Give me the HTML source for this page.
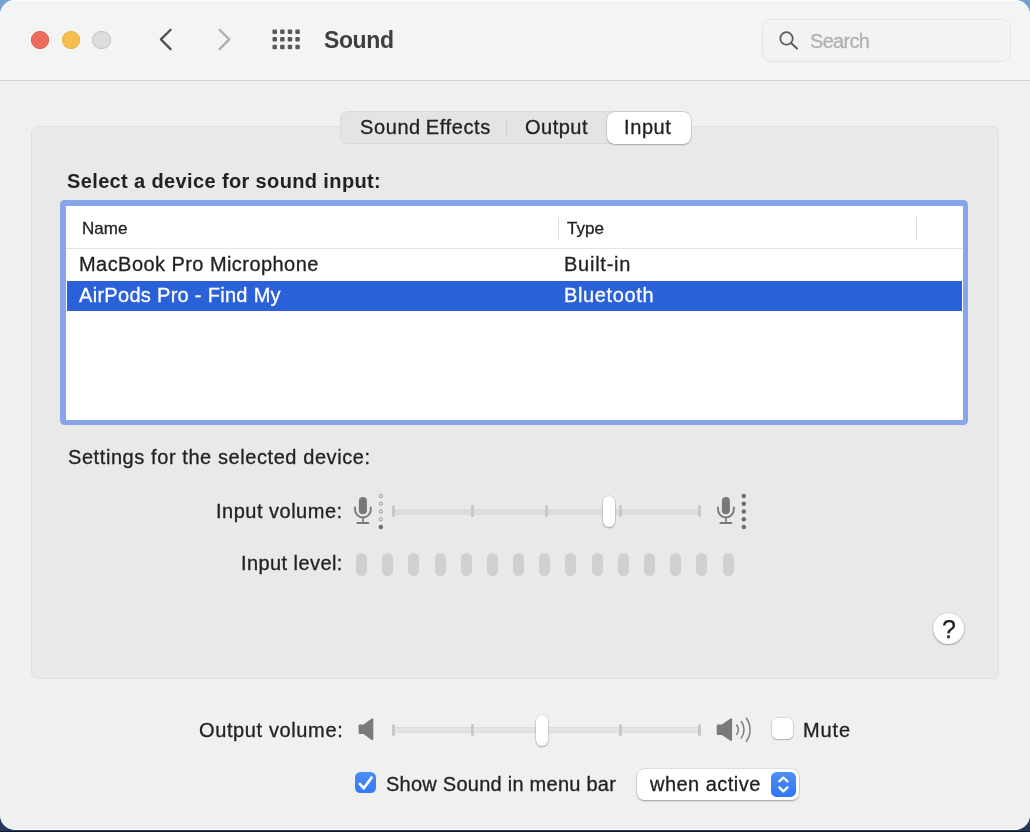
<!DOCTYPE html>
<html><head><meta charset="utf-8">
<style>
*{box-sizing:border-box;margin:0;padding:0}
html,body{width:1030px;height:832px;overflow:hidden}
body{font-family:"Liberation Sans",sans-serif;color:#222;position:relative;
 background:linear-gradient(to bottom,#74a0d0 0,#74a0d0 415px,#24395b 416px,#24395b 830.5px,#0d1c33 831px,#0d1c33 100%);}
.abs{position:absolute}
#win{left:0;top:0;width:1030px;height:830px;background:#f0f0f0;border-radius:15px;overflow:hidden}
#win:after{content:"";position:absolute;left:0;top:0;right:0;bottom:0;border-radius:15px;box-shadow:inset 0 -1px 0 rgba(255,255,255,.9),inset 0 1px 0 rgba(255,255,255,.7);pointer-events:none}
#in{left:0;top:0;width:1030px;height:830px}
#tb{left:0;top:0;width:1030px;height:81px;background:#f3f4f4;border-bottom:1px solid #d2d2d2}
.tl{width:18.4px;height:18.4px;border-radius:50%;top:30.8px}
.t{white-space:nowrap;line-height:24px;font-size:20px;will-change:transform;-webkit-text-stroke:0.3px}
#panel{left:31px;top:126px;width:968px;height:553px;background:#e9e9e9;border:1px solid #e0e0e0;border-radius:7px}
#seg{left:340px;top:111px;width:351px;height:33px;background:#e4e4e4;border:1px solid #d9d9d9;border-radius:8px}
#segsel{left:607px;top:112px;width:84px;height:32px;background:#fff;border-radius:8px;box-shadow:0 0 0 0.5px rgba(0,0,0,.12),0 1px 2px rgba(0,0,0,.25)}
#ring{left:60px;top:200.2px;width:908.2px;height:224.5px;background:#87a5ea;border-radius:4.6px}
#list{left:65.5px;top:205.7px;width:897.5px;height:214.1px;background:#fff}
#sel{left:66.5px;top:280.8px;width:895.5px;height:30px;background:#2a60d8}
.track{height:6px;background:#dcdcdc;border-radius:3px}
.tick{width:3px;height:12px;background:#c8c8c8;border-radius:1.5px}
.knob{width:12.6px;height:31px;background:#fff;border-radius:6.3px;box-shadow:0 0 0 0.5px rgba(0,0,0,.12),0 1px 2px rgba(0,0,0,.3)}
.lv{width:11px;height:23px;border-radius:5.5px;background:#d0d0d0;top:553px}
</style></head><body>
<div id="win" class="abs"><div id="in" class="abs">
 <div id="tb" class="abs"></div>
 <div class="abs tl" style="left:30.8px;background:#ec6a5e;box-shadow:inset 0 0 0 .5px #d5584c"></div>
 <div class="abs tl" style="left:61.8px;background:#f4bf4f;box-shadow:inset 0 0 0 .5px #dba73a"></div>
 <div class="abs tl" style="left:92.2px;background:#dcdcdc;box-shadow:inset 0 0 0 1px #c6c6c6"></div>
 <svg class="abs" style="left:150px;top:20px" width="100" height="40" viewBox="0 0 100 40">
  <path d="M20.6 9.7 L10.9 19.4 L20.6 29.1" fill="none" stroke="#505050" stroke-width="2.3" stroke-linecap="round" stroke-linejoin="round"/>
  <path d="M69.6 9.7 L79.3 19.4 L69.6 29.1" fill="none" stroke="#b0b0b0" stroke-width="2.3" stroke-linecap="round" stroke-linejoin="round"/>
 </svg>
 <svg class="abs" style="left:272.3px;top:28.4px" width="30" height="26" viewBox="0 0 30 26" fill="#595959">
  <g id="r"><rect x="0.5" y="1.5" width="4.5" height="4.5" rx="1"/><rect x="8.1" y="1.5" width="4.5" height="4.5" rx="1"/><rect x="15.7" y="1.5" width="4.5" height="4.5" rx="1"/><rect x="23.3" y="1.5" width="4.5" height="4.5" rx="1"/></g>
  <use href="#r" y="7.6"/><use href="#r" y="15.2"/>
 </svg>
 <div class="abs t" style="left:324px;top:28px;font-size:23px;font-weight:bold;color:#3e3e3e;letter-spacing:-0.4px;-webkit-text-stroke:0">Sound</div>
 <div class="abs" style="left:762px;top:19px;width:249px;height:43px;border:1px solid #e4e4e4;border-radius:9px;background:#f2f3f3"></div>
 <svg class="abs" style="left:776px;top:28px" width="26" height="26" viewBox="0 0 26 26"><circle cx="10.5" cy="10.4" r="6.2" fill="none" stroke="#5c5c5c" stroke-width="1.8"/><path d="M15.1 15 L21 20.6" stroke="#5c5c5c" stroke-width="2" stroke-linecap="round"/></svg>
 <div class="abs t" style="left:810px;top:29px;color:#b1b1b1;letter-spacing:-0.7px">Search</div>

 <div id="panel" class="abs"></div>
 <div id="seg" class="abs"></div>
 <div class="abs" style="left:506px;top:120px;width:1px;height:16px;background:#cfcfcf"></div>
 <div id="segsel" class="abs"></div>
 <div class="abs t" style="left:360px;top:115px;letter-spacing:0.6px;word-spacing:-1.2px">Sound Effects</div>
 <div class="abs t" style="left:525px;top:115px;letter-spacing:0.5px">Output</div>
 <div class="abs t" style="left:624.4px;top:114.7px;letter-spacing:0.6px">Input</div>

 <div class="abs t" style="left:67px;top:168.5px;-webkit-text-stroke:0;font-weight:bold;letter-spacing:0.37px">Select a device for sound input:</div>
 <div id="ring" class="abs"></div>
 <div id="list" class="abs"></div>
 <div class="abs" style="left:66px;top:248px;width:896px;height:1px;background:#e3e3e3"></div>
 <div class="abs" style="left:558px;top:217px;width:1px;height:23px;background:#dcdcdc"></div>
 <div class="abs" style="left:916px;top:217px;width:1px;height:23px;background:#dcdcdc"></div>
 <div class="abs t" style="left:82px;top:217px;font-size:17px">Name</div>
 <div class="abs t" style="left:567px;top:217px;font-size:17px">Type</div>
 <div class="abs t" style="left:79px;top:252px;letter-spacing:0.44px">MacBook Pro Microphone</div>
 <div class="abs t" style="left:564px;top:252px;letter-spacing:0.75px">Built-in</div>
 <div id="sel" class="abs"></div>
 <div class="abs t" style="left:79px;top:283px;color:#fff;letter-spacing:0.3px">AirPods Pro - Find My</div>
 <div class="abs t" style="left:564px;top:283px;color:#fff;letter-spacing:0.64px">Bluetooth</div>

 <div class="abs t" style="left:68px;top:445px;letter-spacing:0.58px">Settings for the selected device:</div>
 <div class="abs t" style="left:216px;top:499px;letter-spacing:0.5px">Input volume:</div>
 <div class="abs t" style="left:241px;top:551px;letter-spacing:0.42px">Input level:</div>

 <!-- mic left -->
 <svg class="abs" style="left:350px;top:492px" width="40" height="40" viewBox="0 0 40 40">
  <rect x="8.9" y="5" width="8" height="17.2" rx="4" fill="#787878"/>
  <path d="M5 15.4 V17.6 a7.9 7.9 0 0 0 15.8 0 V15.4" fill="none" stroke="#787878" stroke-width="1.85" stroke-linecap="round"/>
  <path d="M12.9 25.5 V30.8" stroke="#787878" stroke-width="1.6"/><path d="M7.4 31 H18.4" stroke="#787878" stroke-width="1.85" stroke-linecap="round"/>
  <g fill="none" stroke="#999" stroke-width="1"><circle cx="30.8" cy="4" r="1.6"/><circle cx="30.8" cy="11.8" r="1.6"/><circle cx="30.8" cy="19.5" r="1.6"/><circle cx="30.8" cy="27.3" r="1.6"/></g>
  <circle cx="30.8" cy="35" r="2.25" fill="#6e6e6e"/>
 </svg>
 <div class="abs track" style="left:393px;top:508.5px;width:308px"></div>
 <div class="abs tick" style="left:392px;top:505.3px"></div>
 <div class="abs tick" style="left:471px;top:505.3px"></div>
 <div class="abs tick" style="left:545px;top:505.3px"></div>
 <div class="abs tick" style="left:619px;top:505.3px"></div>
 <div class="abs tick" style="left:698px;top:505.3px"></div>
 <div class="abs knob" style="left:602.7px;top:496px"></div>
 <!-- mic right -->
 <svg class="abs" style="left:713px;top:492px" width="40" height="40" viewBox="0 0 40 40">
  <rect x="8.9" y="5" width="8" height="17.2" rx="4" fill="#787878"/>
  <path d="M5 15.4 V17.6 a7.9 7.9 0 0 0 15.8 0 V15.4" fill="none" stroke="#787878" stroke-width="1.85" stroke-linecap="round"/>
  <path d="M12.9 25.5 V30.8" stroke="#787878" stroke-width="1.6"/><path d="M7.4 31 H18.4" stroke="#787878" stroke-width="1.85" stroke-linecap="round"/>
  <g fill="#6e6e6e"><circle cx="30.8" cy="4" r="2.25"/><circle cx="30.8" cy="11.8" r="2.25"/><circle cx="30.8" cy="19.5" r="2.25"/><circle cx="30.8" cy="27.3" r="2.25"/><circle cx="30.8" cy="35" r="2.25"/></g>
 </svg>
 <!-- level bars -->
 <div id="lvs"><div class="abs lv" style="left:356.0px"></div><div class="abs lv" style="left:382.2px"></div><div class="abs lv" style="left:408.4px"></div><div class="abs lv" style="left:434.5px"></div><div class="abs lv" style="left:460.7px"></div><div class="abs lv" style="left:486.9px"></div><div class="abs lv" style="left:513.1px"></div><div class="abs lv" style="left:539.3px"></div><div class="abs lv" style="left:565.4px"></div><div class="abs lv" style="left:591.6px"></div><div class="abs lv" style="left:617.8px"></div><div class="abs lv" style="left:644.0px"></div><div class="abs lv" style="left:670.2px"></div><div class="abs lv" style="left:696.3px"></div><div class="abs lv" style="left:722.5px"></div></div>

 <div class="abs" style="left:933px;top:613px;width:31px;height:31px;border-radius:50%;background:#fff;box-shadow:0 0 0 .5px rgba(0,0,0,.12),0 1px 2px rgba(0,0,0,.3)"></div>
 <div class="abs t" style="left:941.6px;top:616.6px;font-size:25px;color:#222;-webkit-text-stroke:0.25px #222">?</div>

 <div class="abs t" style="left:199px;top:718px;letter-spacing:0.62px">Output volume:</div>
 <svg class="abs" style="left:356px;top:716px" width="24" height="28" viewBox="0 0 24 28"><path d="M3.6 9.6 H7.8 L16.3 3.4 V23.1 L7.8 17 H3.6 Z" fill="#7a7a7a" stroke="#7a7a7a" stroke-width="2" stroke-linejoin="round"/></svg>
 <div class="abs track" style="left:393px;top:727px;width:308px;background:#e3e3e3;box-shadow:inset 0 0 0 .5px rgba(0,0,0,.05)"></div>
 <div class="abs tick" style="left:392px;top:724px"></div>
 <div class="abs tick" style="left:471px;top:724px"></div>
 <div class="abs tick" style="left:619px;top:724px"></div>
 <div class="abs tick" style="left:698px;top:724px"></div>
 <div class="abs knob" style="left:535.6px;top:715px"></div>
 <svg class="abs" style="left:714px;top:714px" width="40" height="32" viewBox="0 0 40 32"><path d="M3.7 11.5 H8 L17.1 5.2 V25.8 L8 20 H3.7 Z" fill="#7a7a7a" stroke="#7a7a7a" stroke-width="2" stroke-linejoin="round"/>
 <path d="M22.7 11 A8.2 8.2 0 0 1 22.7 20.4 M27.35 7.5 A14 14 0 0 1 27.35 23.9 M32.4 4.2 A20 20 0 0 1 32.4 27.2" fill="none" stroke="#7a7a7a" stroke-width="1.5" stroke-linecap="round"/></svg>
 <div class="abs" style="left:772px;top:718px;width:21px;height:21px;border-radius:5px;background:#fff;box-shadow:0 0 0 .5px rgba(0,0,0,.18),0 1px 1.5px rgba(0,0,0,.2)"></div>
 <div class="abs t" style="left:803px;top:718px;letter-spacing:0.9px">Mute</div>

 <div class="abs" style="left:354.9px;top:771.9px;width:21.4px;height:21.6px;border-radius:5.2px;background:linear-gradient(#4d8ef8,#3478f3)"></div>
 <svg class="abs" style="left:354.9px;top:771.9px" width="22" height="22" viewBox="0 0 22 22"><path d="M4.8 11.9 L8.8 16.3 L16.5 5.6" fill="none" stroke="#fff" stroke-width="2.7" stroke-linecap="round" stroke-linejoin="round"/></svg>
 <div class="abs t" style="left:386px;top:772px;letter-spacing:0.25px">Show Sound in menu bar</div>
 <div class="abs" style="left:637.3px;top:769.1px;width:161.6px;height:30.5px;border-radius:7px;background:#fff;box-shadow:0 0 0 .5px rgba(0,0,0,.12),0 1px 2px rgba(0,0,0,.3)"></div>
 <div class="abs t" style="left:650px;top:772px;letter-spacing:0.47px">when active</div>
 <div class="abs" style="left:770.9px;top:771.9px;width:25px;height:24.8px;border-radius:5.6px;background:linear-gradient(#4d8ef8,#3177f2)"></div>
 <svg class="abs" style="left:771px;top:771.9px" width="25" height="25" viewBox="0 0 25 25"><path d="M8.3 9.4 L12.4 5.5 L16.5 9.4 M8.3 15.4 L12.4 19.4 L16.5 15.4" fill="none" stroke="#fff" stroke-width="2.3" stroke-linecap="round" stroke-linejoin="round"/></svg>
</div></div>
</body></html>
